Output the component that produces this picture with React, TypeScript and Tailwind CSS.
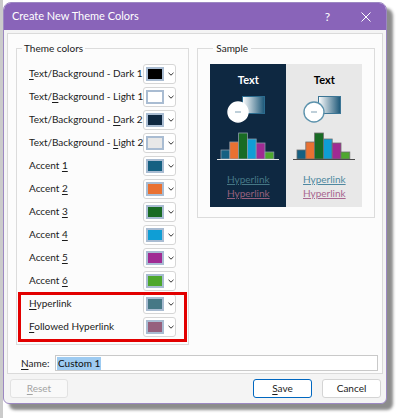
import React from 'react';

type Row = { pre: string; key: string; post: string; swatch: string };

const rows: Row[] = [
  { pre: '', key: 'T', post: 'ext/Background - Dark 1', swatch: 'bg-[#000000]' },
  { pre: 'Text/', key: 'B', post: 'ackground - Light 1', swatch: 'bg-[#ffffff]' },
  { pre: 'Text/Background - ', key: 'D', post: 'ark 2', swatch: 'bg-[#0e2841]' },
  { pre: 'Text/Background - ', key: 'L', post: 'ight 2', swatch: 'bg-[#e8e8e8]' },
  { pre: 'Accent ', key: '1', post: '', swatch: 'bg-[#156082]' },
  { pre: 'Accent ', key: '2', post: '', swatch: 'bg-[#e97132]' },
  { pre: 'Accent ', key: '3', post: '', swatch: 'bg-[#196b24]' },
  { pre: 'Accent ', key: '4', post: '', swatch: 'bg-[#0f9ed5]' },
  { pre: 'Accent ', key: '5', post: '', swatch: 'bg-[#a02b93]' },
  { pre: 'Accent ', key: '6', post: '', swatch: 'bg-[#4ea72e]' },
];

const linkRows: Row[] = [
  { pre: '', key: 'H', post: 'yperlink', swatch: 'bg-[#467886]' },
  { pre: '', key: 'F', post: 'ollowed Hyperlink', swatch: 'bg-[#96607d]' },
];

const bars = [
  { h: 9, c: '#156082' },
  { h: 17, c: '#e97132' },
  { h: 26, c: '#196b24' },
  { h: 20, c: '#0f9ed5' },
  { h: 16, c: '#a02b93' },
  { h: 7, c: '#4ea72e' },
];

const ColorRow = ({ row }: { row: Row }) => (
  <div className="flex h-[23px] items-center justify-between pl-[12px] pr-[12px]">
    <span className="whitespace-nowrap">
      {row.pre}
      <span className="underline underline-offset-[2px]">{row.key}</span>
      {row.post}
    </span>
    <div className="flex h-[20px] w-[33px] items-center rounded-[3px] border border-[#d6d6d6] bg-white pl-[2px]">
      <div className={`h-[14px] w-[18px] border-2 border-[#a9bcd2] ${row.swatch}`} />
      <svg width="6" height="4" viewBox="0 0 6 4" className="ml-[4px]">
        <path d="M0.5 0.8 L3 3.2 L5.5 0.8" fill="none" stroke="#333" strokeWidth="1" />
      </svg>
    </div>
  </div>
);

const SampleArt = ({ dark }: { dark: boolean }) => {
  const id = dark ? 'gradDark' : 'gradLight';
  return (
    <svg width="76" height="70" viewBox="0 0 76 70" className="mt-[5px]">
      <defs>
        <linearGradient id={id} x1="0" x2="1" y1="0" y2="0">
          <stop offset="0" stopColor="#ffffff" />
          <stop offset="1" stopColor="#1b5677" />
        </linearGradient>
      </defs>
      <rect x="32.5" y="4.5" width="22" height="17" fill={`url(#${id})`} stroke={dark ? '#2b6b8e' : '#3c7595'} strokeWidth="1" />
      <circle cx="28" cy="20" r="10" fill="#ffffff" stroke={dark ? '#ffffff' : '#5d93ad'} strokeWidth="1.4" />
      <line x1="25" x2="31" y1="20" y2="20" stroke="#7f9fb3" strokeWidth="1" />
      {bars.map((b, i) => (
        <rect
          key={i}
          x={11 + i * 8.8}
          y={67 - b.h}
          width="8.8"
          height={b.h}
          fill={b.c}
          stroke={dark ? '#8a9aa8' : '#6f6f6f'}
          strokeWidth="0.8"
        />
      ))}
      <line x1="7" x2="69" y1="67.5" y2="67.5" stroke={dark ? '#e6e6e6' : '#4a4a4a'} strokeWidth="1" />
    </svg>
  );
};

const SamplePanel = ({ dark }: { dark: boolean }) => (
  <div className={`flex w-[76px] flex-col items-center pt-[9px] ${dark ? 'bg-[#0e2841] text-white' : 'bg-[#e8e8e8] text-black'}`}>
    <span className="text-[11px] font-bold leading-[14px]">Text</span>
    <SampleArt dark={dark} />
    <span className={`mt-[10px] text-[10px] leading-[14px] underline ${dark ? 'text-[#467886]' : 'text-[#4f88a0]'}`}>Hyperlink</span>
    <span className={`text-[10px] leading-[14px] underline ${dark ? 'text-[#96607d]' : 'text-[#a8668f]'}`}>Hyperlink</span>
  </div>
);

export default function App() {
  return (
    <div
      className="flex h-[418px] w-[400px] items-start bg-white text-[10px] text-[#1b1b1b]"
      style={{ fontFamily: 'Lato, "Noto Sans", sans-serif' }}
    >
      <div className="h-full w-[3px] bg-[#cbcbcb]" />
      <div className="mt-[2px] flex w-[384px] flex-col overflow-hidden rounded-t-[8px] rounded-b-[6px] border border-[#9c88c2] bg-[#f4f4f4] shadow-[6px_6px_3px_rgba(0,0,0,0.45)]">
        {/* title bar */}
        <div className="flex h-[27px] items-center bg-[#8964b9] pl-[8px] text-white">
          <span className="text-[11px]">Create New Theme Colors</span>
          <span className="ml-auto text-[12px]">?</span>
          <svg width="10" height="10" viewBox="0 0 10 10" className="ml-[31px] mr-[15px]">
            <path d="M0.5 0.5 L9.5 9.5 M9.5 0.5 L0.5 9.5" stroke="#fff" strokeWidth="1" />
          </svg>
        </div>

        {/* content frame */}
        <div className="mx-[3px] mt-[3px] flex flex-col border border-[#dadada] bg-[#fcfcfc]">
          <div className="mt-[7px] flex items-start pl-[8px]">
            <fieldset className="w-[173px] border border-[#dcdcdc] pb-[6px]">
              <legend className="ml-[5px] px-[2px] leading-[14px]">Theme colors</legend>
              <div className="pt-[7px]">
                {rows.map((r) => (
                  <ColorRow key={r.pre + r.key} row={r} />
                ))}
                <div className="relative">
                  {linkRows.map((r) => (
                    <ColorRow key={r.key} row={r} />
                  ))}
                  <div className="absolute inset-x-[1px] top-0 -bottom-[4px] border-[3px] border-[#e20000]" />
                </div>
              </div>
            </fieldset>
            <fieldset className="ml-[8px] w-[178px] border border-[#dcdcdc] pb-[10px] pl-[12px]">
              <legend className="ml-[3px] px-[3px] leading-[14px]">Sample</legend>
              <div className="mt-[9px] flex h-[143px]">
                <SamplePanel dark />
                <SamplePanel dark={false} />
              </div>
            </fieldset>
          </div>

          <div className="mb-[2px] mt-[10px] flex items-center pl-[13px] pr-[4px]">
            <span className="w-[34px]">
              <span className="underline underline-offset-[2px]">N</span>ame:
            </span>
            <div className="flex h-[16px] flex-1 items-center border border-[#c9c9c9] bg-white pl-[1px]">
              <span className="bg-[#9ecbf1] px-[1px] leading-[13px] text-[#0c0c0c]">Custom 1</span>
            </div>
          </div>
        </div>

        {/* buttons */}
        <div className="mb-[5px] mt-[5px] flex items-center pl-[6px] pr-[5px]">
          <div className="flex h-[19px] w-[58px] items-center justify-center rounded-[3px] border border-[#e2e2e2] bg-[#f9f9f9] text-[#a3a3a3]">
            <span>
              <span className="underline underline-offset-[2px]">R</span>eset
            </span>
          </div>
          <div className="ml-auto flex h-[19px] w-[59px] items-center justify-center rounded-[3px] border border-[#0067c0] bg-white">
            <span>
              <span className="underline underline-offset-[2px]">S</span>ave
            </span>
          </div>
          <div className="ml-[10px] flex h-[19px] w-[59px] items-center justify-center rounded-[3px] border border-[#d4d4d4] bg-white">
            Cancel
          </div>
        </div>
      </div>
    </div>
  );
}
